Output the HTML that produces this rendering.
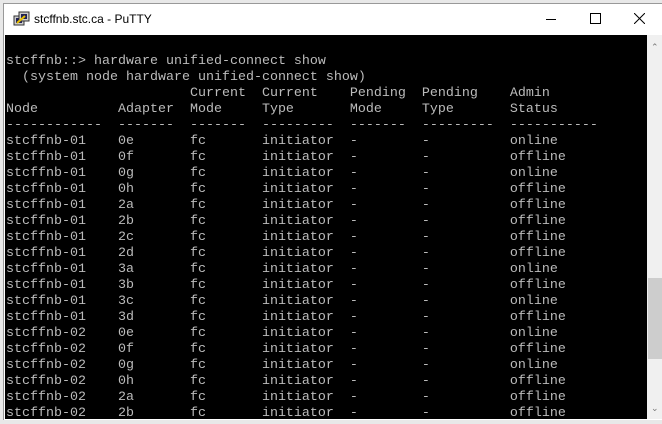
<!DOCTYPE html>
<html><head><style>
body{margin:0;width:662px;height:424px;overflow:hidden;background:#e8e8e8;position:relative;font-family:"Liberation Sans",sans-serif}
#win{position:absolute;left:3px;top:3px;width:659px;height:416px;background:#fff;border-top:1px solid #999;border-left:1px solid #999}
#title{position:absolute;left:0;top:0;width:659px;height:31px;background:#fff}
#title .t{position:absolute;left:30px;top:8px;font-size:12px;color:#000}
#term{position:absolute;left:1px;top:31px;width:642px;height:384px;background:#000;overflow:hidden}
pre{margin:0;position:absolute;left:1px;top:19px;font-family:"Liberation Mono",monospace;font-size:13.33px;line-height:16px;color:#bbb}
#sb{position:absolute;left:643px;top:31px;width:16px;height:384px;background:#f0f0f0}
#thumb{position:absolute;left:1px;top:243px;width:14px;height:81px;background:#cdcdcd}
</style></head><body>
<div id="win">
<div id="title">
<svg style="position:absolute;left:9px;top:7px" width="17" height="17" viewBox="0 0 17 17"><rect x="1" y="5" width="10" height="9" fill="#ccc" stroke="#333"/><rect x="3" y="7" width="6" height="5" fill="#225"/><rect x="6" y="1" width="10" height="9" fill="#ccc" stroke="#333"/><rect x="8" y="3" width="6" height="5" fill="#225"/><path d="M4 12 L12 5" stroke="#e8c000" stroke-width="2"/></svg>
<span class="t">stcffnb.stc.ca - PuTTY</span>
<div style="position:absolute;left:542px;top:15px;width:10px;height:1px;background:#000"></div>
<div style="position:absolute;left:586px;top:9px;width:9px;height:9px;border:1px solid #000"></div>
<svg style="position:absolute;left:630px;top:9px" width="11" height="11"><path d="M0 0L11 11M11 0L0 11" stroke="#000" stroke-width="1"/></svg>
</div>
<div id="term"><pre>stcffnb::&gt; hardware unified-connect show
  (system node hardware unified-connect show)
                       Current  Current    Pending  Pending    Admin
Node          Adapter  Mode     Type       Mode     Type       Status
------------  -------  -------  ---------  -------  ---------  -----------
stcffnb-01    0e       fc       initiator  -        -          online
stcffnb-01    0f       fc       initiator  -        -          offline
stcffnb-01    0g       fc       initiator  -        -          online
stcffnb-01    0h       fc       initiator  -        -          offline
stcffnb-01    2a       fc       initiator  -        -          offline
stcffnb-01    2b       fc       initiator  -        -          offline
stcffnb-01    2c       fc       initiator  -        -          offline
stcffnb-01    2d       fc       initiator  -        -          offline
stcffnb-01    3a       fc       initiator  -        -          online
stcffnb-01    3b       fc       initiator  -        -          offline
stcffnb-01    3c       fc       initiator  -        -          online
stcffnb-01    3d       fc       initiator  -        -          offline
stcffnb-02    0e       fc       initiator  -        -          online
stcffnb-02    0f       fc       initiator  -        -          offline
stcffnb-02    0g       fc       initiator  -        -          online
stcffnb-02    0h       fc       initiator  -        -          offline
stcffnb-02    2a       fc       initiator  -        -          offline
stcffnb-02    2b       fc       initiator  -        -          offline</pre></div>
<div id="sb"><div id="thumb"></div>
<div style="position:absolute;left:4px;top:7px;font-size:9px;color:#777">&#8963;</div>
<div style="position:absolute;left:4px;top:368px;font-size:9px;color:#777">&#8964;</div></div>
</div>
</body></html>
